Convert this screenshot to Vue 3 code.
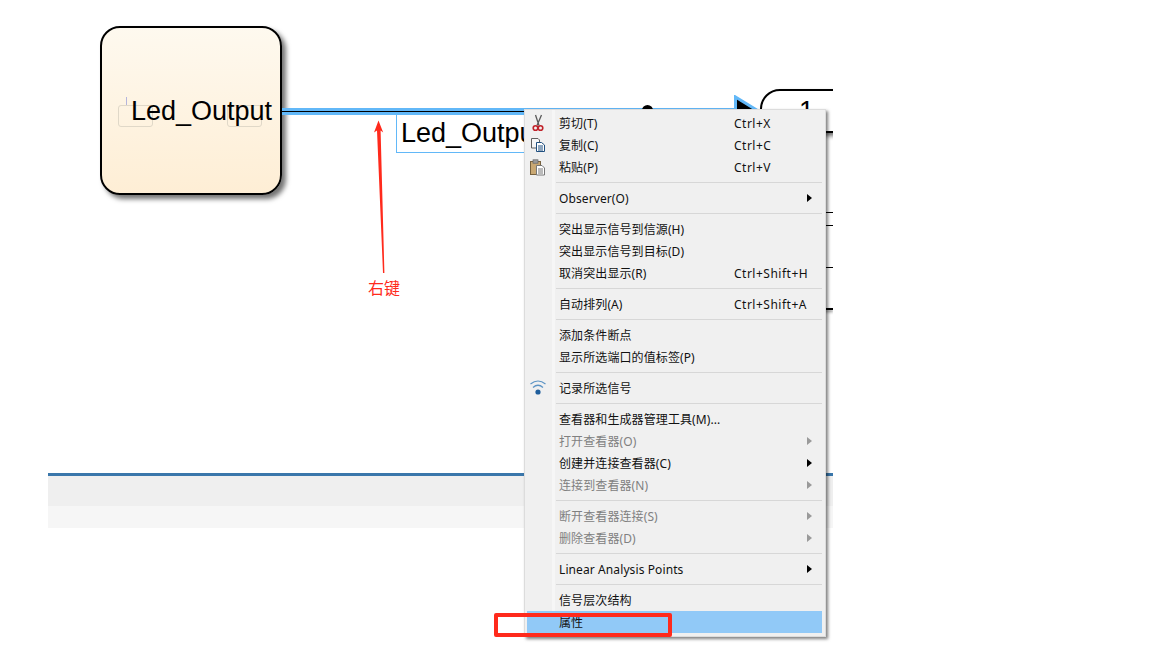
<script setup>
const sections = [
  [
    { label: '剪切(T)', key: 'Ctrl+X', icon: 'cut' },
    { label: '复制(C)', key: 'Ctrl+C', icon: 'copy' },
    { label: '粘贴(P)', key: 'Ctrl+V', icon: 'paste' },
  ],
  [{ label: 'Observer(O)', sub: true }],
  [
    { label: '突出显示信号到信源(H)' },
    { label: '突出显示信号到目标(D)' },
    { label: '取消突出显示(R)', key: 'Ctrl+Shift+H' },
  ],
  [{ label: '自动排列(A)', key: 'Ctrl+Shift+A' }],
  [{ label: '添加条件断点' }, { label: '显示所选端口的值标签(P)' }],
  [{ label: '记录所选信号', icon: 'wifi' }],
  [
    { label: '查看器和生成器管理工具(M)...' },
    { label: '打开查看器(O)', sub: true, off: true },
    { label: '创建并连接查看器(C)', sub: true },
    { label: '连接到查看器(N)', sub: true, off: true },
  ],
  [
    { label: '断开查看器连接(S)', sub: true, off: true },
    { label: '删除查看器(D)', sub: true, off: true },
  ],
  [{ label: 'Linear Analysis Points', sub: true }],
  [{ label: '信号层次结构' }, { label: '属性', active: true }],
]
</script>

<template>
  <div class="page">
    <div class="canvas">
      <div class="block">
        <span class="ghost ghost-l"></span>
        <span class="ghost ghost-r"></span>
        <span class="tick"></span>
        <span class="block-name">Led_Output</span>
      </div>
      <div class="wire"></div>
      <div class="signal-label">Led_Outpu</div>
      <div class="dot"></div>
      <svg class="arrowhead" width="32" height="30" viewBox="0 0 32 30">
        <path d="M1.5 2 L29 19 L1.5 27 Z" fill="#000" stroke="#62b8f8" stroke-width="3" />
      </svg>
      <div class="out-port"><span>1</span></div>
      <div class="edge e2"></div>
      <div class="edge e3"></div>
      <div class="edge e4"></div>
      <div class="edge e5"></div>
      <div class="panel">
        <div class="panel-top"></div>
        <div class="panel-bottom"></div>
      </div>
    </div>

    <svg class="annot" width="1152" height="648" viewBox="0 0 1152 648">
      <path d="M378.5 120.5 L374 132.5 L377 130.5 L383 273 L384.4 273 L380.6 130.5 L383.2 132.5 Z" fill="#ff2a1c" />
    </svg>
    <div class="annot-text">右键</div>

    <div class="menu">
      <template v-for="(sec, i) in sections" :key="i">
        <div v-if="i" class="sep-row"><span class="sep"></span></div>
        <div
          v-for="item in sec"
          :key="item.label"
          class="row"
          :class="{ off: item.off, active: item.active }"
        >
          <span class="gutter">
            <svg v-if="item.icon === 'cut'" width="16" height="18" viewBox="0 0 16 18">
              <path d="M11.5 1 L7 11.5 M5.5 1 L9 11.5" stroke="#5a5a5a" stroke-width="1.3" fill="none" />
              <circle cx="5.5" cy="14" r="2.3" fill="none" stroke="#c0232b" stroke-width="1.6" />
              <circle cx="10.5" cy="14" r="2.3" fill="none" stroke="#c0232b" stroke-width="1.6" />
            </svg>
            <svg v-else-if="item.icon === 'copy'" width="16" height="16" viewBox="0 0 16 16">
              <path d="M1.5 1.5 H8 L9.5 3 V11 H1.5 Z" fill="#f6f6f6" stroke="#5f5f5f" />
              <path d="M6.5 5.5 H11.5 L14.5 8 V14.5 H6.5 Z" fill="#fff" stroke="#1f4f7f" />
              <path d="M8 9 H13 M8 11 H13 M8 13 H13" stroke="#1f4f7f" />
            </svg>
            <svg v-else-if="item.icon === 'paste'" width="17" height="17" viewBox="0 0 17 17">
              <rect x="1.5" y="2.5" width="10" height="13" fill="#c9a873" stroke="#77623f" />
              <rect x="4" y="0.8" width="5" height="3.4" fill="#9a9a9a" stroke="#666" stroke-width=".7" />
              <path d="M7.5 6.5 H13 L15.5 9 V16 H7.5 Z" fill="#fff" stroke="#777" />
              <path d="M9 10 H14 M9 12 H14 M9 14 H14" stroke="#777" />
            </svg>
            <svg v-else-if="item.icon === 'wifi'" width="16" height="18" viewBox="0 0 16 18">
              <path d="M0.5 5 Q8 -1 15.5 5 M3 8.5 Q8 4 13 8.5" stroke="#5b93c4" stroke-width="1.2" fill="none" />
              <circle cx="8" cy="13" r="2.6" fill="#1f5e9c" />
            </svg>
          </span>
          <span class="label">{{ item.label }}</span>
          <span v-if="item.key" class="key">{{ item.key }}</span>
          <span v-if="item.sub" class="caret"></span>
        </div>
      </template>
    </div>

    <div class="red-box"></div>
  </div>
</template>

<style>
html, body { margin: 0; background: #fff; }
</style>

<style scoped>
.page {
  position: relative;
  width: 1152px;
  height: 648px;
  overflow: hidden;
  background: #fff;
  font-family: "Noto Sans", "Noto Sans CJK SC", sans-serif;
}
.canvas {
  position: absolute;
  left: 0;
  top: 0;
  width: 833px;
  height: 648px;
  overflow: hidden;
}
.block {
  position: absolute;
  left: 100px;
  top: 26px;
  width: 178px;
  height: 165px;
  border: 2px solid #000;
  border-radius: 20px;
  background: linear-gradient(#fef9ef, #feeed5);
  box-shadow: 4px 4px 5px rgba(0, 0, 0, .55);
}
.block-name {
  position: absolute;
  left: 29px;
  top: 67px;
  font-family: "Liberation Sans", sans-serif;
  font-size: 27px;
  line-height: 32px;
  color: #000;
  white-space: nowrap;
}
.ghost {
  position: absolute;
  top: 77px;
  width: 33px;
  height: 20px;
  border: 1px solid #e0d8c8;
  border-radius: 3px;
}
.ghost-l { left: 16px; }
.ghost-r { left: 125px; }
.tick {
  position: absolute;
  left: 24px;
  top: 69px;
  width: 1px;
  height: 8px;
  background: #b5b5dc;
}
.wire {
  position: absolute;
  left: 282px;
  top: 108px;
  width: 460px;
  height: 7px;
  box-sizing: border-box;
  background: linear-gradient(#62b8f8 0 3px, #000 3px 4px, #62b8f8 4px);
}
.signal-label {
  position: absolute;
  left: 396px;
  top: 114px;
  width: 140px;
  height: 39px;
  box-sizing: border-box;
  border: 1px solid #62b8f8;
  padding-left: 4px;
  background: #fff;
  font-family: "Liberation Sans", sans-serif;
  font-size: 27px;
  line-height: 36px;
  color: #000;
  white-space: nowrap;
}
.dot {
  position: absolute;
  left: 642px;
  top: 105px;
  width: 11px;
  height: 11px;
  border-radius: 50%;
  background: #000;
}
.arrowhead {
  position: absolute;
  left: 734px;
  top: 95px;
}
.out-port {
  position: absolute;
  left: 760px;
  top: 89px;
  width: 100px;
  height: 44px;
  box-sizing: border-box;
  border: 2px solid #000;
  border-radius: 20px 0 0 0;
  background: #fff;
  box-shadow: 3px 3px 4px rgba(0, 0, 0, .55);
  font-family: "Liberation Sans", sans-serif;
  font-size: 27px;
}
.out-port span {
  position: absolute;
  left: 37px;
  top: 5px;
}
.edge {
  position: absolute;
  left: 800px;
  width: 33px;
  background: #000;
}
.e2 { top: 212px; height: 1px; }
.e3 { top: 225px; height: 1px; }
.e4 { top: 267px; height: 1px; }
.e5 { top: 308px; height: 2px; box-shadow: 0 2px 3px rgba(0,0,0,.5); }
.panel {
  position: absolute;
  left: 48px;
  top: 473px;
  width: 785px;
  display: flex;
  flex-direction: column;
  border-top: 3px solid #3a77ab;
}
.panel-top { height: 30px; background: #efefef; }
.panel-bottom { height: 22px; background: #f6f6f6; }
.annot {
  position: absolute;
  left: 0;
  top: 0;
}
.annot-text {
  position: absolute;
  left: 368px;
  top: 277px;
  font-family: "Noto Sans CJK SC", sans-serif;
  font-size: 16px;
  line-height: 20px;
  color: #ff2a1c;
}
.menu {
  position: absolute;
  left: 524px;
  top: 109px;
  width: 302px;
  box-sizing: border-box;
  padding: 2px 3px 3px 2px;
  background: linear-gradient(to right, #f0f0f0 0 27px, #f6f6f6 27px 30px, #f0f0f0 30px);
  border: 1px solid #dcdcdc;
  box-shadow: 2px 2px 3px rgba(0, 0, 0, .5);
  font-size: 12px;
  color: #111;
}
.row {
  display: flex;
  align-items: center;
  height: 22px;
  position: relative;
}
.row.off { color: #808080; }
.row.active { background: #91c9f7; }
.gutter {
  flex: none;
  width: 21px;
  height: 22px;
  margin-right: 11px;
  display: flex;
  align-items: center;
  justify-content: center;
}
.label {
  white-space: nowrap;
  line-height: 22px;
  letter-spacing: .1px;
  margin-top: 2px;
}
.key {
  position: absolute;
  left: 207px;
  top: 1px;
  line-height: 22px;
  white-space: nowrap;
  letter-spacing: .5px;
}
.caret {
  position: absolute;
  left: 280px;
  top: 7px;
  width: 0;
  height: 0;
  border-left: 5px solid #000;
  border-top: 4px solid transparent;
  border-bottom: 4px solid transparent;
}
.row.off .caret { border-left-color: #9a9a9a; }
.sep-row {
  height: 9px;
  display: flex;
  align-items: center;
  padding-left: 29px;
  box-sizing: border-box;
}
.sep {
  flex: 1;
  height: 1px;
  background: #d7d7d7;
}
.red-box {
  position: absolute;
  left: 494px;
  top: 613px;
  width: 178px;
  height: 24px;
  box-sizing: border-box;
  border: 4px solid #ff2a1c;
  border-radius: 2px;
}
</style>
